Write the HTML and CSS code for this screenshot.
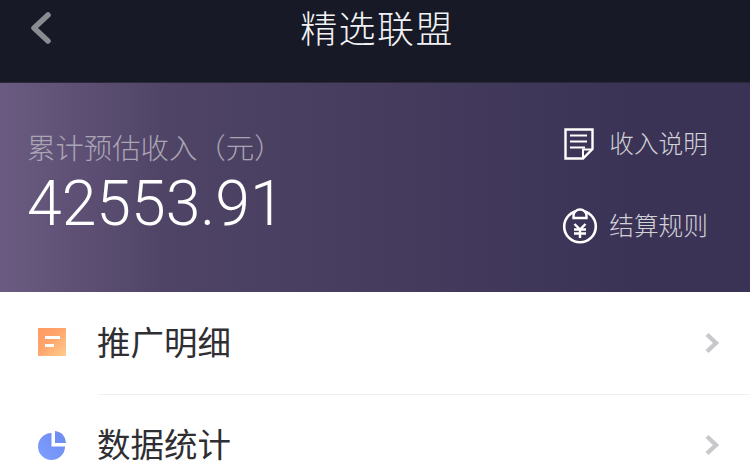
FILE: index.html
```html
<!DOCTYPE html>
<html lang="zh-CN">
<head>
    <meta charset="UTF-8" />
    <title>精选联盟</title>
    <link rel="stylesheet" href="styles.css">
</head>
<body>

<header class="nav">
    <svg class="back" width="24" height="34" viewBox="0 0 24 34"><path d="M20 4 L6 17 L20 30" fill="none" stroke="#8b8c92" stroke-width="5.5" stroke-linecap="round" stroke-linejoin="round"/></svg>
    <h1 class="nav-title">精选联盟</h1>
</header>

<section class="banner">
    <div class="income">
        <p class="income-label">累计预估收入（元）</p>
        <p class="income-value">42553.91</p>
    </div>
    <div class="links">
        <div class="link">
            <svg class="icon-doc" width="30" height="32" viewBox="0 0 30 32"><path d="M1.5 1.5 H28.5 V21 L19 30.5 H1.5 Z" fill="none" stroke="#fff" stroke-width="2.4"/><path d="M19 30 V21.5 H28" fill="none" stroke="#fff" stroke-width="2"/><path d="M6 7.5 H23 M6 13.5 H23 M6 19.5 H21" stroke="#fff" stroke-width="2"/></svg>
            <span>收入说明</span>
        </div>
        <div class="link">
            <svg class="icon-lock" width="36" height="36" viewBox="0 0 36 36"><circle cx="18" cy="18.5" r="15.8" fill="none" stroke="#fff" stroke-width="2.6"/><path d="M11.5 7.5 A6.5 6 0 0 1 24.5 7.5 V10 H11.5 Z" fill="#3e3558" stroke="#fff" stroke-width="2.4"/><path d="M12.5 16 L18 21.5 L23.5 16 M12 21.5 H24 M12 25.5 H24 M18 21.5 V30" fill="none" stroke="#fff" stroke-width="2.4"/></svg>
            <span>结算规则</span>
        </div>
    </div>
</section>

<ul class="menu">
    <li class="row">
        <span class="icon icon-detail"><i></i><i class="short"></i></span>
        <span class="row-text">推广明细</span>
        <svg class="arrow" width="16" height="22" viewBox="0 0 16 22"><path d="M3 2.5 L12 11 L3 19.5" fill="none" stroke="#c8c8cc" stroke-width="4.4"/></svg>
    </li>
    <li class="row">
        <svg class="icon icon-pie" width="28" height="30" viewBox="0 0 28 30">
            <defs><linearGradient id="pie" x1="0" y1="1" x2="1" y2="0"><stop offset="0" stop-color="#80a0ff"/><stop offset="1" stop-color="#6a8af0"/></linearGradient></defs>
            <path d="M13.5 2 V15.5 H27 A13.5 13.5 0 1 1 13.5 2 Z" fill="url(#pie)"/>
            <path d="M17 0 A12 12 0 0 1 28 12 H17 Z" fill="#6f8ff2"/>
        </svg>
        <span class="row-text">数据统计</span>
        <svg class="arrow" width="16" height="22" viewBox="0 0 16 22"><path d="M3 2.5 L12 11 L3 19.5" fill="none" stroke="#c8c8cc" stroke-width="4.4"/></svg>
    </li>
</ul>

</body>
</html>
```

FILE: styles.css
```css
html, body {
    margin: 0;
    height: 476px;
    overflow: hidden;
    background-color: #fff;
    font-family: "Noto Sans CJK SC", "Noto Sans", sans-serif;
}
p, h1, ul {
    margin: 0;
    padding: 0;
}
.nav {
    height: 77px;
    background-color: #171a26;
    border-bottom: 1px solid #2a2b36;
    display: flex;
    justify-content: center;
    padding: 4px 0 1px 4px;
    position: relative;
}
.back {
    position: absolute;
    left: 28px;
    top: 11px;
}
.nav-title {
    font-size: 37px;
    font-weight: 300;
    line-height: 46px;
    letter-spacing: 1.4px;
    color: #f2f2f4;
}
.banner {
    height: 209px;
    background: linear-gradient(90deg, #6b5b82 0%, #4f4466 22%, #453c5e 50%, #3b3356 85%, #3b3356 100%);
    display: flex;
    justify-content: space-between;
    padding: 0 42px 0 27px;
    box-sizing: border-box;
}
.income {
    padding-top: 44px;
}
.income-label {
    font-size: 28.4px;
    font-weight: 300;
    line-height: 40px;
    color: #aaa5b5;
}
.income-value {
    font-family: Roboto, sans-serif;
    font-size: 62.5px;
    font-weight: 350;
    line-height: 72px;
    color: #fff;
    margin-top: 1px;
}
.links {
    display: flex;
    flex-direction: column;
    gap: 46px;
    padding-top: 43px;
}
.link {
    display: flex;
    align-items: center;
    height: 36px;
    font-size: 24.7px;
    font-weight: 300;
    color: #d2d1d6;
}
.link span {
    padding-bottom: 5px;
}
.icon-doc {
    margin: 0 15px 0 2px;
}
.icon-lock {
    margin-right: 11px;
}
.menu {
    list-style: none;
}
.row {
    height: 102px;
    display: flex;
    align-items: center;
    padding: 0 30px 3px 38px;
    box-sizing: border-box;
    position: relative;
}
.row + .row::before {
    content: "";
    position: absolute;
    left: 98px;
    right: 0;
    top: 0;
    border-top: 1px solid #f0f0f0;
}
.icon {
    width: 28px;
    height: 28px;
    flex-shrink: 0;
}
.icon-pie {
    height: 30px;
    margin-top: 5px;
}
.icon-detail {
    background: linear-gradient(135deg, #ff9a62 0%, #ffa56c 45%, #ffcd8f 100%);
    display: flex;
    flex-direction: column;
    justify-content: center;
    gap: 5px;
    padding-left: 7px;
    box-sizing: border-box;
}
.icon-detail i {
    display: block;
    width: 15px;
    height: 3px;
    background-color: #fff;
}
.icon-detail i.short {
    width: 9px;
}
.row-text {
    margin-left: 31px;
    padding-bottom: 3px;
    font-size: 33.5px;
    font-weight: 400;
    color: #2f2f33;
    flex: 1;
}
.arrow {
    flex-shrink: 0;
    margin-top: 3px;
}
```
